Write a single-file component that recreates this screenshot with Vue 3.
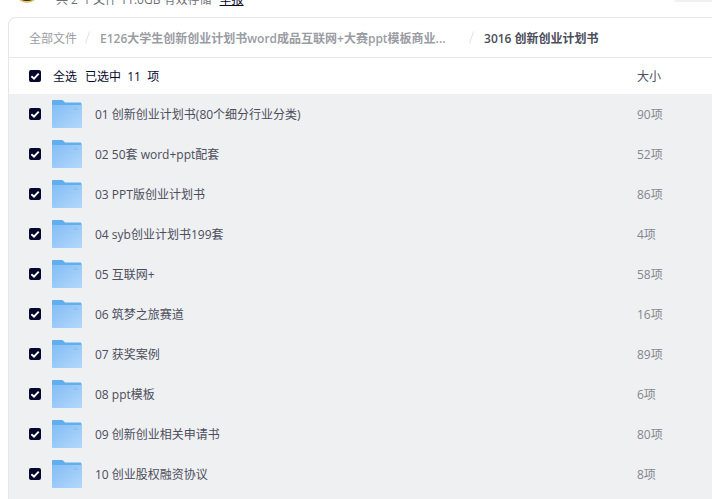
<template>
  <div class="page">
    <div class="top-strip">
      <div class="avatar"></div>
      <span class="top-text">共 2 个文件 11.0GB 有效存储</span>
      <a class="top-link">举报</a>
      <div class="top-tab"></div>
    </div>
    <div class="panel">
      <div class="crumbs">
        <span class="crumb">全部文件</span>
        <span class="slash"></span>
        <span class="crumb mid">E126大学生创新创业计划书word成品互联网+大赛ppt模板商业...</span>
        <span class="slash last"></span>
        <span class="crumb current">3016 创新创业计划书</span>
      </div>
      <div class="head-row">
        <span class="check">
          <svg viewBox="0 0 12 12" width="12" height="12"><path d="M2.4 6.2 5 8.6 9.7 3.6" fill="none" stroke="#fff" stroke-width="1.9" /></svg>
        </span>
        <span class="select-text">全选</span>
        <span class="select-text count">已选中&nbsp; 11 &nbsp;项</span>
        <span class="size-head">大小</span>
      </div>
      <div class="list">
        <div class="row" v-for="file in files" :key="file.name">
          <span class="check">
            <svg viewBox="0 0 12 12" width="12" height="12"><path d="M2.4 6.2 5 8.6 9.7 3.6" fill="none" stroke="#fff" stroke-width="1.9" /></svg>
          </span>
          <svg class="folder" viewBox="0 0 30 28" width="30" height="28">
            <defs>
              <linearGradient id="folderBody" x1="0" y1="0" x2="1" y2="1">
                <stop offset="0" stop-color="#83bdf4" />
                <stop offset="1" stop-color="#b3d8fb" />
              </linearGradient>
            </defs>
            <path d="M1 0H10.5L13 2.5H28.5Q29.5 2.5 29.5 4V8H0V1Q0 0 1 0Z" fill="#60aeee" />
            <path d="M1 5H29Q30 5 30 6V27Q30 28 29 28H1Q0 28 0 27V6Q0 5 1 5Z" fill="url(#folderBody)" />
            <rect x="22" y="8" width="4" height="2" fill="#8fc2f2" />
          </svg>
          <span class="name">{{ file.name }}</span>
          <span class="size">{{ file.size }}</span>
        </div>
      </div>
    </div>
  </div>
</template>

<script setup>
const files = [
  { name: '01 创新创业计划书(80个细分行业分类)', size: '90项' },
  { name: '02 50套 word+ppt配套', size: '52项' },
  { name: '03 PPT版创业计划书', size: '86项' },
  { name: '04 syb创业计划书199套', size: '4项' },
  { name: '05 互联网+', size: '58项' },
  { name: '06 筑梦之旅赛道', size: '16项' },
  { name: '07 获奖案例', size: '89项' },
  { name: '08 ppt模板', size: '6项' },
  { name: '09 创新创业相关申请书', size: '80项' },
  { name: '10 创业股权融资协议', size: '8项' }
]
</script>

<style>
html, body {
  background: #fff;
  overflow: hidden;
}
</style>

<style scoped>
.page {
  width: 712px;
  height: 499px;
  overflow: hidden;
  font-family: "Open Sans", "Noto Sans CJK SC", sans-serif;
  font-size: 12px;
}

.top-strip {
  height: 17px;
  display: flex;
  align-items: flex-end;
  padding-left: 15px;
  position: relative;
  overflow: hidden;
}

.avatar {
  width: 24px;
  height: 24px;
  margin-top: -21px;
  flex: none;
  align-self: flex-start;
  border-radius: 50%;
  background: #2b2419;
  border-bottom: 2px solid #e7c66a;
  box-sizing: border-box;
}

.top-text {
  margin-left: 17px;
  margin-bottom: 9px;
  color: #6b6f76;
  line-height: 16px;
}

.top-link {
  margin-left: 8px;
  margin-bottom: 9px;
  color: #05082c;
  line-height: 16px;
  text-decoration: underline;
}

.top-tab {
  position: absolute;
  top: -4px;
  right: 0;
  width: 38px;
  height: 6px;
  background: #f0f0f2;
  border-bottom-left-radius: 3px;
}

.panel {
  margin-left: 8px;
  border: 1px solid #e6e6e8;
  border-right: none;
  border-bottom: none;
  border-top-left-radius: 8px;
  height: 482px;
  box-sizing: border-box;
}

.crumbs {
  height: 40px;
  display: flex;
  align-items: center;
  padding-left: 20px;
  border-bottom: 1px solid #e6e6e8;
  box-sizing: border-box;
}

.crumb {
  color: #9a9ca3;
  white-space: nowrap;
}

.mid {
  font-weight: 600;
  width: 359px;
}

.current {
  color: #4b4d5a;
  font-weight: 600;
}

.slash {
  width: 1px;
  height: 13px;
  margin: 0 12px 0 10px;
  background: #e3e3e6;
  transform: rotate(18deg);
}

.slash.last {
  margin-left: 12px;
}

.head-row {
  height: 36px;
  display: flex;
  align-items: center;
  padding-left: 20px;
  color: #05082c;
}

.check {
  width: 12px;
  height: 12px;
  flex: none;
  display: flex;
  background: #05082c;
  border-radius: 2px;
}

.select-text {
  margin-left: 12px;
}

.count {
  margin-left: 8px;
}

.size-head {
  margin-left: auto;
  width: 75px;
  color: #4b4d5a;
}

.list {
  background: #eff0f2;
  height: 405px;
}

.row {
  height: 40px;
  display: flex;
  align-items: center;
  padding-left: 20px;
}

.folder {
  flex: none;
  margin-left: 11px;
}

.name {
  margin-left: 13px;
  color: #4b4d5a;
}

.size {
  margin-left: auto;
  width: 75px;
  color: #84868f;
}
</style>
